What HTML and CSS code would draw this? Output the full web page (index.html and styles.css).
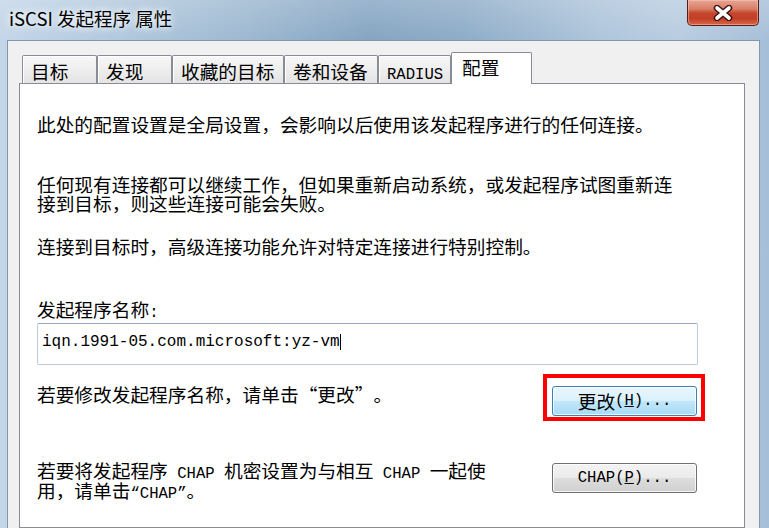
FILE: index.html
```html
<!DOCTYPE html>
<html lang="zh-CN">
<head>
<meta charset="utf-8">
<title>iSCSI 发起程序 属性</title>
<link rel="stylesheet" href="styles.css">
</head>
<body>
<div class="window">
  <div class="titlebar">
    <div class="title">iSCSI 发起程序 属性</div>
    <button class="close" aria-label="关闭">
      <svg width="24" height="16" viewBox="0 0 24 16">
        <path d="M6 3 L18 13 M18 3 L6 13" stroke="#3d1510" stroke-width="6.5" stroke-linecap="round"/>
        <path d="M6 3 L18 13 M18 3 L6 13" stroke="#ffffff" stroke-width="3.6" stroke-linecap="round"/>
      </svg>
    </button>
  </div>
  <div class="client">
    <div class="tabs">
      <div class="tab w75">目标</div>
      <div class="tab w75">发现</div>
      <div class="tab w112">收藏的目标</div>
      <div class="tab w94">卷和设备</div>
      <div class="tab w73"><span class="en">RADIUS</span></div>
      <div class="tab active w81">配置</div>
    </div>
    <div class="panel">
      <p class="txt p1">此处的配置设置是全局设置，会影响以后使用该发起程序进行的任何连接。</p>
      <p class="txt p2">任何现有连接都可以继续工作，但如果重新启动系统，或发起程序试图重新连接到目标，则这些连接可能会失败。</p>
      <p class="txt p3">连接到目标时，高级连接功能允许对特定连接进行特别控制。</p>
      <p class="txt label">发起程序名称<span class="en">:</span></p>
      <div class="textbox"><span class="mono">iqn.1991-05.com.microsoft:yz-vm</span><span class="caret"></span></div>
      <div class="row row-change">
        <p class="txt">若要修改发起程序名称，请单击<span class="q">“</span>更改<span class="q">”</span>。</p>
        <div class="btn-wrap">
          <button class="btn btn-focus">更改<span class="en">(<u>H</u>)...</span></button>
          <div class="highlight"></div>
        </div>
      </div>
      <div class="row row-chap">
        <p class="txt chap-text"><span>若要将发起程序</span><span class="en"> CHAP </span><span>机密设置为与相互</span><span class="en"> CHAP </span><span>一起使</span><span>用，请单击</span><span class="en">“CHAP”</span><span>。</span></p>
        <div class="btn-wrap">
          <button class="btn btn-normal"><span class="en">CHAP(<u>P</u>)...</span></button>
        </div>
      </div>
    </div>
  </div>
</div>
</body>
</html>
```
FILE: styles.css
```css
* { box-sizing: border-box; }
html, body { margin: 0; padding: 0; }
body {
  width: 769px;
  height: 528px;
  overflow: hidden;
  font-family: "Noto Sans CJK SC", "Noto Sans", sans-serif;
  color: #000;
}
.window {
  width: 769px;
  height: 528px;
  display: flex;
  flex-direction: column;
  overflow: hidden;
  background:
    linear-gradient(180deg, rgba(255,255,255,0.18) 0px, rgba(255,255,255,0) 40px),
    linear-gradient(90deg, #c4d6e9 0%, #b3cadf 14%, #9db8d0 32%, #86a5c2 48%, #8eacc7 60%, #aec5db 78%, #b9cde1 88%, #a6bfd8 100%);
}
.titlebar {
  height: 40px;
  flex: none;
  display: flex;
  justify-content: space-between;
  align-items: flex-start;
}
.title {
  font-size: 18.5px;
  line-height: 22px;
  margin: 7px 0 0 9px;
  text-shadow: 0 0 6px #fff, 0 0 10px rgba(255,255,255,0.9);
}
.close {
  width: 72px;
  height: 26px;
  margin: 0 10px 0 0;
  padding: 0;
  border: 1px solid #5a1c16;
  border-top: none;
  border-radius: 0 0 5px 5px;
  background: linear-gradient(180deg, #e7a595 0%, #d98068 35%, #c5462d 52%, #c23f27 75%, #d6684c 100%);
  box-shadow: inset 0 0 0 1px rgba(255,210,200,0.45);
  display: flex;
  align-items: center;
  justify-content: center;
}
.close svg { display: block; }
.client {
  flex: 1;
  margin: 0 9px 0 7px;
  background: #f0f0f0;
  border: 1px solid #8397ad;
  border-bottom: none;
  padding: 11px 14px 0 11px;
  display: flex;
  flex-direction: column;
}
.tabs {
  flex: none;
  height: 31px;
  display: flex;
  align-items: flex-end;
  padding-left: 3px;
}
.tab {
  height: 28px;
  border: 1px solid #898c95;
  border-bottom: none;
  border-radius: 2px 2px 0 0;
  background: linear-gradient(180deg, #f7f7f7 0%, #eeeeee 50%, #e4e4e4 100%);
  box-shadow: inset 1px 1px 0 #ffffff;
  font-size: 18.7px;
  line-height: 19px;
  padding: 5px 0 0 8px;
  white-space: nowrap;
}
.tab.active {
  height: 32px;
  margin-bottom: -1px;
  position: relative;
  z-index: 1;
  background: #ffffff;
  box-shadow: none;
  padding: 4px 0 0 10px;
}
.w75 { width: 75px; }
.w112 { width: 112px; }
.w94 { width: 94px; }
.w73 { width: 73px; }
.w81 { width: 81px; }
.panel {
  flex: 1;
  background: #ffffff;
  border: 1px solid #898c95;
  padding: 0 45px 0 17px;
}
.txt {
  margin: 0;
  font-size: 18.7px;
  line-height: 19px;
}
.en {
  font-family: "Liberation Mono", monospace;
  font-size: 15.6px;
  line-height: 0;
}
.q {
  display: inline-block;
  width: 18.7px;
  line-height: 0;
  text-align: center;
}
.p1 { margin-top: 30px; }
.p2 { margin-top: 41px; width: 645px; }
.p3 { margin-top: 24px; }
.label { margin-top: 44px; }
.textbox {
  margin-top: 5px;
  width: 661px;
  height: 42px;
  border: 1px solid #b9cbdd;
  border-top-color: #95acc6;
  border-radius: 2px;
  padding: 8px 0 0 4px;
  background: #fff;
  display: flex;
  align-items: flex-start;
}
.mono {
  font-family: "Liberation Mono", monospace;
  font-size: 16px;
  line-height: 20px;
}
.caret {
  display: inline-block;
  width: 1px;
  height: 16px;
  margin-top: 2px;
  background: #000;
}
.row {
  display: flex;
  justify-content: space-between;
  align-items: flex-start;
  width: 661px;
}
.row-change { margin-top: 19px; }
.row-chap { margin-top: 44px; }
.chap-text { width: 458px; line-height: 20px; }
.btn-wrap {
  position: relative;
  margin-right: 1px;
}
.row-change .btn-wrap { margin-top: 2px; }
.row-chap .btn-wrap { margin-top: 3px; }
.btn {
  width: 145px;
  height: 30px;
  border-radius: 3px;
  padding: 0;
  font-family: "Noto Sans CJK SC", sans-serif;
  font-size: 18.7px;
  line-height: 20px;
  color: #000;
  display: flex;
  align-items: center;
  justify-content: center;
}
.btn-focus {
  border: 1px solid #3c7fb1;
  background: linear-gradient(180deg, #e9f6fd 0%, #dbf1fc 48%, #c0e6fb 52%, #a9daf5 100%);
  box-shadow: inset 0 0 0 1px rgba(255,255,255,0.75);
}
.btn-normal {
  border: 1px solid #707070;
  background: linear-gradient(180deg, #f3f3f3 0%, #ebebeb 48%, #dddddd 52%, #d0d0d0 100%);
  box-shadow: inset 0 0 0 1px rgba(255,255,255,0.8);
}
.highlight {
  position: absolute;
  left: -9px;
  top: -12px;
  width: 162px;
  height: 47px;
  border: 4px solid #ff0000;
  pointer-events: none;
}
```
